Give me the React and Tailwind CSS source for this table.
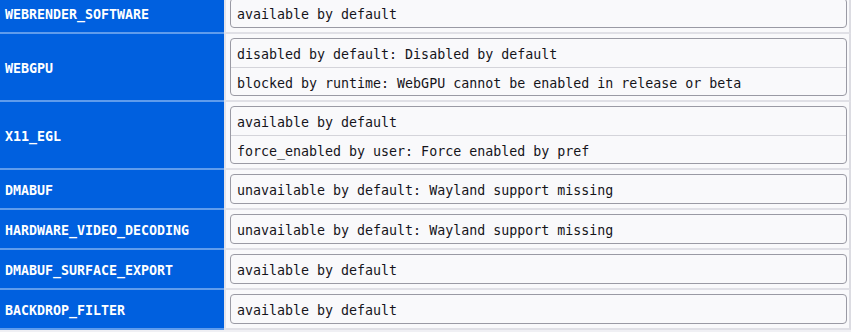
const features = [
  { name: 'WEBRENDER_SOFTWARE', lines: ['available by default'] },
  {
    name: 'WEBGPU',
    lines: [
      'disabled by default: Disabled by default',
      'blocked by runtime: WebGPU cannot be enabled in release or beta',
    ],
  },
  {
    name: 'X11_EGL',
    lines: ['available by default', 'force_enabled by user: Force enabled by pref'],
  },
  { name: 'DMABUF', lines: ['unavailable by default: Wayland support missing'] },
  { name: 'HARDWARE_VIDEO_DECODING', lines: ['unavailable by default: Wayland support missing'] },
  { name: 'DMABUF_SURFACE_EXPORT', lines: ['available by default'] },
  { name: 'BACKDROP_FILTER', lines: ['available by default'] },
];

const FeatureRow = ({ name, lines }) => (
  <div className="flex">
    {/* Feature name */}
    <div className="w-[224px] shrink-0 flex items-center pl-[5px] pt-[3px] bg-[#0060df] border-b-2 border-[#5f9cec] text-white font-bold">
      {name}
    </div>

    {/* Status box */}
    <div className="flex-1 border-l-2 border-r-2 border-b-2 border-l-[#e4e4ea] border-r-[#dcdce2] border-b-[#e0e0e6] bg-[#f9f9fb] pl-[4px] pr-[2px] pt-[4px] pb-[4px]">
      <div className="rounded-[4px] border border-[#9a9aa4] bg-[#f9f9fb]">
        {lines.map((line, i) => (
          <div
            key={i}
            className={`h-[28px] flex items-center pl-[6px] pt-[4px] text-[#15141a] ${i > 0 ? 'border-t border-[#d4d4da]' : ''}`}
          >
            {line}
          </div>
        ))}
      </div>
    </div>
  </div>
);

const App = () => {
  return (
    <div
      className="w-[851px] h-[332px] overflow-hidden bg-[#f0f0f4] text-[13.3px] leading-none"
      style={{ fontFamily: '"DejaVu Sans Mono", "Liberation Mono", monospace' }}
    >
      <div className="-mt-[6px]">
        {features.map((f) => (
          <FeatureRow key={f.name} name={f.name} lines={f.lines} />
        ))}
      </div>
    </div>
  );
};

export default App;
